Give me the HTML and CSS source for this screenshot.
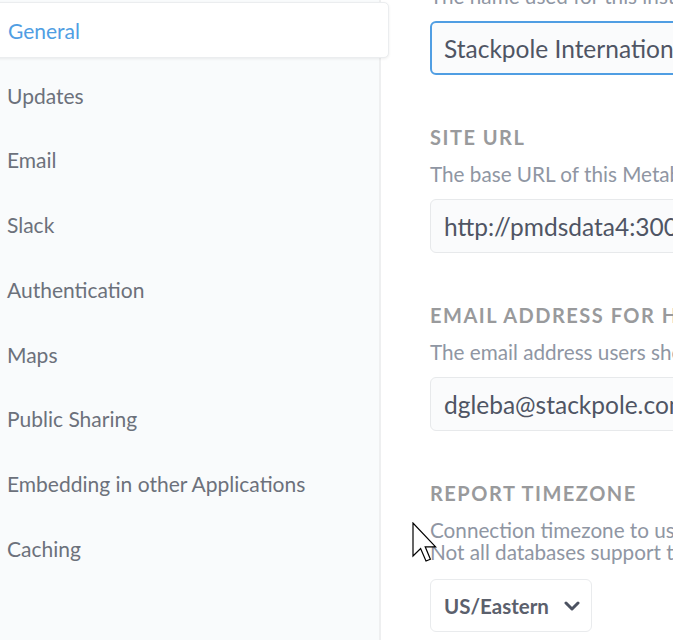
FILE: index.html
```html
<!DOCTYPE html>
<html>
<head>
<meta charset="utf-8">
<link rel="stylesheet" href="styles.css">
</head>
<body>
<div class="page">
  <nav class="sidebar">
    <ul class="nav-list">
      <li class="nav-item active"><span class="nav-link">General</span></li>
      <li class="nav-item"><span class="nav-link">Updates</span></li>
      <li class="nav-item"><span class="nav-link">Email</span></li>
      <li class="nav-item"><span class="nav-link">Slack</span></li>
      <li class="nav-item"><span class="nav-link">Authentication</span></li>
      <li class="nav-item"><span class="nav-link">Maps</span></li>
      <li class="nav-item"><span class="nav-link">Public Sharing</span></li>
      <li class="nav-item"><span class="nav-link">Embedding in other Applications</span></li>
      <li class="nav-item"><span class="nav-link">Caching</span></li>
    </ul>
  </nav>
  <main class="content">
    <section class="setting first">
      <h3 class="setting-title">Site Name</h3>
      <p class="setting-desc">The name used for this instance of Metabase.</p>
      <div class="input focused">Stackpole International</div>
    </section>
    <section class="setting">
      <h3 class="setting-title">Site URL</h3>
      <p class="setting-desc">The base URL of this Metabase instance, used for links.</p>
      <div class="input">http://pmdsdata4:3000</div>
    </section>
    <section class="setting">
      <h3 class="setting-title">Email Address for Help Requests</h3>
      <p class="setting-desc">The email address users should be referred to if they encounter a problem.</p>
      <div class="input">dgleba@stackpole.com</div>
    </section>
    <section class="setting">
      <h3 class="setting-title">Report Timezone</h3>
      <p class="setting-desc">Connection timezone to use when executing queries. Defaults to system timezone.<br>Not all databases support timezones, in which case this setting won't take effect.</p>
      <div class="select">
        <span class="select-value">US/Eastern</span>
        <svg class="chevron" width="16" height="10" viewBox="0 0 16 10"><path d="M2 2 L8 8 L14 2" fill="none" stroke="#4c5261" stroke-width="3" stroke-linecap="round" stroke-linejoin="round"/></svg>
      </div>
    </section>
  </main>
  <svg class="cursor" width="26" height="40" viewBox="0 0 13 20"><path d="M0.5 0.5 L0.5 17 L4.3 13.3 L7 19.5 L9.2 18.6 L6.6 12.4 L11.8 12.4 Z" fill="#fff" stroke="#000" stroke-width="0.6" stroke-linejoin="miter"/></svg>
</div>
</body>
</html>
```

FILE: styles.css
```css
html, body {
  margin: 0;
  padding: 0;
  background: #fff;
}

body {
  font-family: Lato, "Open Sans", sans-serif;
  width: 673px;
  height: 640px;
  overflow: hidden;
}

.page {
  position: relative;
  display: flex;
  height: 640px;
  overflow: hidden;
}

.sidebar {
  flex: 0 0 381px;
  min-width: 0;
  box-sizing: border-box;
  background: #f9fbfc;
  border-right: 2px solid #eeeff0;
  position: relative;
  z-index: 2;
}

.nav-list {
  list-style: none;
  margin: -2px 0 0 0;
  padding: 0;
}

.nav-item {
  height: 64.75px;
  display: flex;
  align-items: center;
}

.nav-link {
  display: flex;
  align-items: center;
  flex: 1 1 auto;
  height: 56px;
  padding-left: 7px;
  font-size: 21px;
  color: #6c717b;
  white-space: nowrap;
}

.nav-item.active .nav-link {
  box-sizing: border-box;
  margin-left: -12px;
  margin-right: -10px;
  padding-left: 19px;
  background: #fff;
  color: #509ee3;
  border: 1px solid #ebedef;
  border-radius: 5px;
  box-shadow: 0 1px 3px rgba(0, 0, 0, 0.07);
}

.content {
  flex: 1 1 auto;
  padding-left: 49px;
  min-width: 0;
}

.setting {
  margin-bottom: 50px;
}

.setting.first {
  margin-top: -53px;
}

.setting-title {
  margin: 0 0 14px 0;
  height: 24px;
  line-height: 24px;
  font-size: 20px;
  font-weight: 700;
  letter-spacing: 1.5px;
  text-transform: uppercase;
  color: #999a9c;
  white-space: nowrap;
}

.setting-desc {
  margin: 0 0 14px 0;
  font-size: 20.7px;
  line-height: 22px;
  color: #8f96a3;
  white-space: nowrap;
}

.input {
  box-sizing: border-box;
  width: 620px;
  height: 54px;
  display: flex;
  align-items: center;
  padding-left: 13px;
  font-size: 24.5px;
  color: #4f5564;
  background: #fafbfc;
  border: 1px solid #e7e9eb;
  border-radius: 6px;
  white-space: nowrap;
}

.input.focused {
  padding-left: 12px;
  border: 2px solid #509ee3;
}

.select {
  box-sizing: border-box;
  margin-top: 16px;
  width: 162px;
  height: 53px;
  display: flex;
  align-items: center;
  gap: 15px;
  padding-left: 13px;
  background: #fff;
  border: 1px solid #e9ebed;
  border-radius: 6px;
}

.select-value {
  font-size: 20.5px;
  font-weight: 700;
  color: #5b606c;
}

.chevron {
  display: block;
}

.cursor {
  position: absolute;
  left: 412px;
  top: 522px;
  z-index: 5;
}
```
